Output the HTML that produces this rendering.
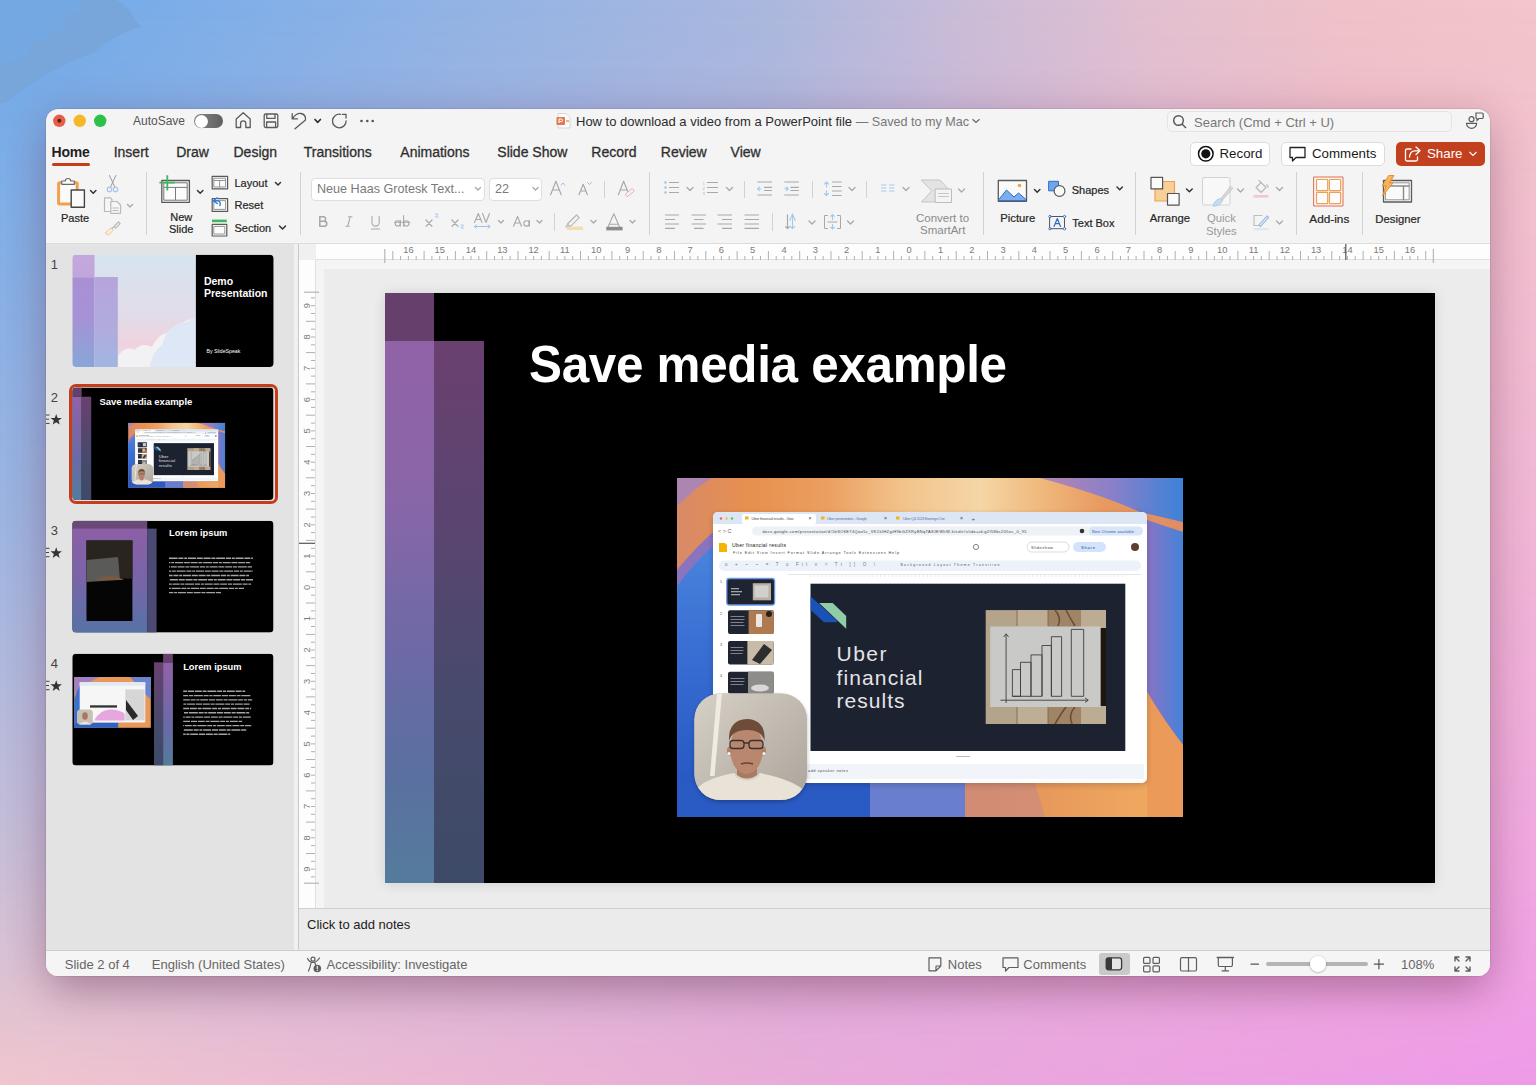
<!DOCTYPE html>
<html><head><meta charset="utf-8">
<style>
*{margin:0;padding:0;box-sizing:border-box}
html,body{width:1536px;height:1085px;overflow:hidden}
body{position:relative;font-family:"Liberation Sans",sans-serif;background:linear-gradient(to right,#6eaaea 0%,#8cb2e6 25%,#aab8de 50%,#c8bcd8 62%,#e2c0d0 75%,#f0c2c8 88%,#f2c6ca 100%)}
.a{position:absolute}
#bgb{left:0;top:0;width:1536px;height:1085px;background:linear-gradient(to right,#f0c6ce 0%,#e8acd8 50%,#ee9ae8 100%);-webkit-mask-image:linear-gradient(to bottom,transparent 0%,rgba(0,0,0,.36) 48%,rgba(0,0,0,.7) 80%,#000 100%)}
#win{left:46px;top:109px;width:1444px;height:867px;border-radius:12px;background:#f4f4f4;overflow:hidden;box-shadow:0 20px 40px -6px rgba(90,35,60,.34),0 0 40px 4px rgba(100,40,90,.12),0 0 0 .5px rgba(0,0,0,.15)}
.t{position:absolute;white-space:nowrap;line-height:1}
</style></head><body>
<div class="a" id="bgb"></div>
<svg class="a" style="left:0;top:0" width="160" height="110"><polygon points="0,0 80,0 80,12 71,13 60,30 45,38 32,42 28,55 15,60 0,66" fill="#73a8e3"/><polygon points="80,0 116,0 128,8 135,20 141,27 130,30 120,35 107,42 95,52 85,56 70,62 55,70 45,75 35,82 25,88 15,95 8,102 0,104 0,66 15,60 28,55 32,42 45,38 60,30 71,13 80,12" fill="#78a6da"/></svg>

<div class="a" id="win">
  <!-- everything inside uses coordinates relative to window: subtract (46,109) -->

  <!-- TITLE BAR -->
  <svg class="a" style="left:0;top:0" width="70" height="24">
    <circle cx="13.3" cy="11.8" r="6.2" fill="#e5604a"/><circle cx="13.3" cy="11.8" r="2" fill="#5a1f14"/>
    <circle cx="33.8" cy="11.8" r="6.2" fill="#f5b928"/>
    <circle cx="54.2" cy="11.8" r="6.2" fill="#2cc14a"/>
  </svg>
  <div class="t" style="left:87px;top:6px;font-size:12px;color:#555">AutoSave</div>
  <div class="a" style="left:148px;top:5px;width:29px;height:14px;border-radius:7px;background:linear-gradient(to right,#8a8a8a,#5e5e5e)"></div>
  <div class="a" style="left:148.5px;top:5.5px;width:13px;height:13px;border-radius:50%;background:#fff;box-shadow:0 0 1px rgba(0,0,0,.4)"></div>
  <svg class="a" style="left:188px;top:2px" width="200" height="22" fill="none" stroke="#5a5a5a" stroke-width="1.3" stroke-linejoin="round" stroke-linecap="round">
    <path d="M2.2 16.5 V8 L9.2 1.8 L16.2 8 V16.5 H11.8 V12.5 A2.6 2.6 0 0 0 6.6 12.5 V16.5 Z"/>
    <path d="M31.7 3 H42.3 A1.5 1.5 0 0 1 43.8 4.5 V15 A1.5 1.5 0 0 1 42.3 16.5 H31.7 A1.5 1.5 0 0 1 30.2 15 V4.5 A1.5 1.5 0 0 1 31.7 3 Z M32.8 3 V7.4 H41 V3 M32.6 16.5 V11 H41.6 V16.5"/>
    <path d="M58.2 2.7 V7.8 H63.5 M58.4 7.8 Q62 2 67 2.5 Q72 3.5 71.5 9 L61 17.8"/>
    <path d="M81 8.5 L83.7 11.4 L86.4 8.5" stroke-width="1.7" stroke="#333"/>
    <path d="M106.3 3.3 A6.8 6.8 0 1 0 112.1 9.8 M108.2 3.3 H112 V7.1"/>
  </svg>
  <svg class="a" style="left:312px;top:8px" width="18" height="8" fill="#555"><circle cx="3.5" cy="4" r="1.3"/><circle cx="9.3" cy="4" r="1.3"/><circle cx="14.7" cy="4" r="1.3"/></svg>
  <svg class="a" style="left:510px;top:3px" width="16" height="17">
    <path d="M2 1.5 H10 L14 5.5 V16 H2 Z" fill="#fbfbfb" stroke="#d0d0d0" stroke-width=".8"/>
    <rect x="0.5" y="5" width="8.5" height="8" rx="1" fill="#e07850"/>
    <path d="M3 11 V7 H5.2 A1.3 1.3 0 0 1 5.2 9.6 H3" fill="none" stroke="#fff" stroke-width="1"/>
    <path d="M10 9 H13" stroke="#f0b090" stroke-width="2"/>
  </svg>
  <div class="t" style="left:530px;top:6px;font-size:13px;color:#2b2b2b">How to download a video from a PowerPoint file <span style="color:#777;font-size:12.6px">— Saved to my Mac</span></div>
  <svg class="a" style="left:924.5px;top:9px" width="10" height="6" fill="none" stroke="#666" stroke-width="1.2"><path d="M1.5 1.2 L5 4.5 L8.5 1.2"/></svg>
  <div class="a" style="left:1121px;top:1.5px;width:285px;height:21px;border-radius:5px;border:1px solid #e4e4e4;background:#f5f5f5"></div>
  <svg class="a" style="left:1126px;top:5px" width="16" height="16" fill="none" stroke="#555" stroke-width="1.4"><circle cx="6.5" cy="6.5" r="4.8"/><path d="M10 10 L14 14"/></svg>
  <div class="t" style="left:1148px;top:6.5px;font-size:13px;color:#777">Search (Cmd + Ctrl + U)</div>
  <svg class="a" style="left:1419px;top:2px" width="20" height="18" fill="none" stroke="#5a5a5a" stroke-width="1.2">
    <circle cx="6.5" cy="8.2" r="2.5"/><path d="M1.6 12.4 H11.6 A5 5 0 0 1 1.6 12.4 Z"/>
    <path d="M11 2 H17 A1.2 1.2 0 0 1 18.2 3.2 V6.3 A1.2 1.2 0 0 1 17 7.5 H14 L12 9.3 V7.5 A1 1 0 0 1 11 6.5 V3 A1 1 0 0 1 11 2 Z" />
  </svg>
  <div class="a" style="left:1143.5px;top:32.5px;width:80px;height:24px;border-radius:5px;border:1px solid #dcdcdc;background:#fff"></div>
  <svg class="a" style="left:1151px;top:36px" width="18" height="18"><circle cx="8.8" cy="8.8" r="7.3" fill="none" stroke="#111" stroke-width="1.5"/><circle cx="8.8" cy="8.8" r="4.6" fill="#111"/></svg>
  <div class="t" style="left:1173.5px;top:38px;font-size:13.3px;color:#1a1a1a">Record</div>
  <div class="a" style="left:1235px;top:32.5px;width:103.5px;height:24px;border-radius:5px;border:1px solid #dcdcdc;background:#fff"></div>
  <svg class="a" style="left:1242px;top:36px" width="20" height="18" fill="none" stroke="#222" stroke-width="1.3" stroke-linejoin="round"><path d="M2 2.5 H17 V12.5 H8 L4.5 16 V12.5 H2 Z"/></svg>
  <div class="t" style="left:1266px;top:38px;font-size:13.3px;color:#1a1a1a">Comments</div>
  <div class="a" style="left:1350px;top:32.5px;width:88.5px;height:24px;border-radius:5px;background:#c3401f"></div>
  <svg class="a" style="left:1358px;top:36px" width="18" height="18" fill="none" stroke="#fff" stroke-width="1.3" stroke-linejoin="round" stroke-linecap="round"><path d="M7 4 H3 A1.5 1.5 0 0 0 1.5 5.5 V14.5 A1.5 1.5 0 0 0 3 16 H12 A1.5 1.5 0 0 0 13.5 14.5 V12"/><path d="M12 2 L16 5.8 L12 9.5 M16 5.8 H11 Q6 5.8 5.5 12"/></svg>
  <div class="t" style="left:1381px;top:38px;font-size:13.3px;color:#fff">Share</div>
  <svg class="a" style="left:1422px;top:42px" width="10" height="6" fill="none" stroke="#fff" stroke-width="1.2"><path d="M1.5 1 L5 4.5 L8.5 1"/></svg>

  <!-- TABS -->
  <div class="t" style="left:5.5px;top:36px;font-size:14px;color:#1f1f1f;font-weight:700;letter-spacing:-.2px">Home</div>
  <div class="a" style="left:5.7px;top:54px;width:38px;height:3px;border-radius:2px;background:#c43e1c"></div>
  <div class="t" style="left:67.7px;top:36px;font-size:14px;color:#2f2f2f;-webkit-text-stroke:.3px #2f2f2f">Insert</div>
  <div class="t" style="left:130.2px;top:36px;font-size:14px;color:#2f2f2f;-webkit-text-stroke:.3px #2f2f2f">Draw</div>
  <div class="t" style="left:187.5px;top:36px;font-size:14px;color:#2f2f2f;-webkit-text-stroke:.3px #2f2f2f">Design</div>
  <div class="t" style="left:257.8px;top:36px;font-size:14px;color:#2f2f2f;-webkit-text-stroke:.3px #2f2f2f">Transitions</div>
  <div class="t" style="left:354.3px;top:36px;font-size:14px;color:#2f2f2f;-webkit-text-stroke:.3px #2f2f2f">Animations</div>
  <div class="t" style="left:451.3px;top:36px;font-size:14px;color:#2f2f2f;-webkit-text-stroke:.3px #2f2f2f">Slide Show</div>
  <div class="t" style="left:545.3px;top:36px;font-size:14px;color:#2f2f2f;-webkit-text-stroke:.3px #2f2f2f">Record</div>
  <div class="t" style="left:614.8px;top:36px;font-size:14px;color:#2f2f2f;-webkit-text-stroke:.3px #2f2f2f">Review</div>
  <div class="t" style="left:684.6px;top:36px;font-size:14px;color:#2f2f2f;-webkit-text-stroke:.3px #2f2f2f">View</div>
  <!-- panels -->
  <div class="a" style="left:0;top:135px;width:1444px;height:1px;background:#f4f4f4"></div>
  <div class="a" id="leftpanel" style="left:0;top:135px;width:248px;height:706px;background:#e3e3e3"></div>
  <div class="a" style="left:248px;top:135px;width:4px;height:706px;background:#f0f0f0"></div>
  <div class="a" style="left:252px;top:135px;width:1px;height:706px;background:#c8c8c8"></div>
  <div class="a" style="left:253px;top:135px;width:1191px;height:1px;background:#d6d6d6"></div>
  <div class="a" style="left:0;top:134px;width:1444px;height:1px;background:#dcdcdc"></div>
  <!-- rulers -->
  <div class="a" style="left:253px;top:135px;width:1191px;height:16px;background:#fdfdfd;border-bottom:1px solid #e0e0e0"></div>
  <div class="a" style="left:253px;top:151px;width:17px;height:648px;background:#fdfdfd;border-right:1px solid #e0e0e0"></div>
  <div class="a" style="left:253px;top:135px;width:17px;height:16px;background:#f0f0f0"></div>
  <!-- canvas -->
  <div class="a" style="left:270px;top:151px;width:8px;height:648px;background:#f5f5f5"></div>
  <div class="a" style="left:270px;top:151px;width:1174px;height:9px;background:#f5f5f5"></div>
  <div class="a" style="left:278px;top:160px;width:1166px;height:639px;background:#ececec"></div>
  <!-- notes -->
  <div class="a" style="left:253px;top:799px;width:1191px;height:1px;background:#cfcfcf"></div>
  <div class="a" style="left:253px;top:800px;width:1191px;height:41px;background:#ebebeb"></div>
  <div class="t" style="left:261px;top:809px;font-size:13px;color:#1c1c1c">Click to add notes</div>
  <!-- status -->
  <div class="a" style="left:0;top:841px;width:1444px;height:1px;background:#cdcdcd"></div>
  <div class="a" style="left:0;top:842px;width:1444px;height:25px;background:#f5f5f5"></div>
  <!-- slide -->
  <div class="a" id="slide" style="left:339px;top:184px;width:1050px;height:590px;background:#000;box-shadow:0 1px 12px rgba(0,0,0,.12)"></div>
</div>

<div class="a" id="ov" style="left:0;top:0;width:1536px;height:1085px">

  <!-- SLIDE CONTENT -->
  <div class="a" style="left:385px;top:293px;width:49px;height:48px;background:#673f6d"></div>
  <div class="a" style="left:385px;top:341px;width:49px;height:542px;background:linear-gradient(to bottom,#9262a7 0%,#8866a8 30%,#6a6aa6 60%,#5a70a0 80%,#547c9c 100%)"></div>
  <div class="a" style="left:434px;top:341px;width:49.5px;height:542px;background:linear-gradient(to bottom,#6a4070 0%,#5a4570 35%,#474a6c 65%,#3d4a68 100%)"></div>
  <div class="t" style="left:529px;top:338px;font-size:52.5px;font-weight:700;color:#fff;transform:scaleX(.94);transform-origin:0 0;letter-spacing:-.3px">Save media example</div>

  <!-- EMBEDDED IMAGE -->
  <svg class="a" style="left:677px;top:478px" width="506" height="339" viewBox="677 478 506 339">
    <defs>
      <linearGradient id="wg1" x1="0" y1="0" x2="1" y2="0"><stop offset="0" stop-color="#d88a68"/><stop offset=".15" stop-color="#e8904e"/><stop offset=".3" stop-color="#eba062"/><stop offset=".45" stop-color="#f2c48c"/><stop offset=".6" stop-color="#f5d6a6"/><stop offset=".72" stop-color="#efb87c"/><stop offset=".84" stop-color="#e89a60"/><stop offset="1" stop-color="#e08c64"/></linearGradient><linearGradient id="wg5" x1="0" y1="0" x2="1" y2="0"><stop offset="0" stop-color="#b884b0"/><stop offset=".5" stop-color="#8a80c8"/><stop offset="1" stop-color="#3c82d8"/></linearGradient>
      <linearGradient id="wg2" x1="0" y1="0" x2="0" y2="1"><stop offset="0" stop-color="#4a84dc"/><stop offset=".4" stop-color="#3a70d4"/><stop offset="1" stop-color="#2858c4"/></linearGradient>
      <linearGradient id="wg3" x1="0" y1="0" x2="1" y2="0"><stop offset="0" stop-color="#8a74c4"/><stop offset="1" stop-color="#4482d8"/></linearGradient>
      <linearGradient id="wg4" x1="0" y1="0" x2="1" y2="0"><stop offset="0" stop-color="#e08e58"/><stop offset="1" stop-color="#f0a860"/></linearGradient>
    </defs>
    <g id="emb">
    <rect x="677" y="478" width="506" height="339" fill="url(#wg1)"/>
    <path d="M677 478 H712 Q698 486 688 496 Q682 502 677 505 Z" fill="#a084c4" opacity=".8"/>
    
    <path d="M677 570 Q695 548 713 532 V783 H677 Z" fill="#8a74c0"/>
    <path d="M677 586 Q695 562 713 546 V783 H677 Z" fill="url(#wg2)"/>
    <path d="M1040 478 Q1100 494 1140 512 L1183 522 V478 Z" fill="url(#wg5)"/>
    <path d="M1147 520 L1183 532 V745 Q1165 722 1147 692 Z" fill="url(#wg3)"/>
    <path d="M1147 692 Q1165 722 1183 745 V817 H1147 Z" fill="#eb9a5a"/>
    <path d="M677 783 H965 V817 H677 Z" fill="#2a5ac4"/>
    <path d="M870 783 H965 V817 H870 Z" fill="#6a7ed0"/>
    <path d="M965 783 H1147 V817 H965 Z" fill="url(#wg4)"/>
    <path d="M965 783 H1035 L1045 817 H965 Z" fill="#cc8a80" opacity=".7"/>
    <!-- browser window -->
    <rect x="713" y="514" width="434" height="271" rx="5" fill="#000" opacity=".18" filter="blur(3px)"/>
    <rect x="713" y="512" width="434" height="271" rx="5" fill="#fff"/>
    <path d="M713 524 V517 A5 5 0 0 1 718 512 H1142 A5 5 0 0 1 1147 517 V524 Z" fill="#dde6f5"/>
    <circle cx="721" cy="518.5" r="1.3" fill="#ec6a5e"/><circle cx="726.5" cy="518.5" r="1.3" fill="#f4bf4f"/><circle cx="732" cy="518.5" r="1.3" fill="#61c554"/>
    <rect x="742" y="514" width="74" height="10" rx="2" fill="#fff"/>
    <rect x="745" y="516.5" width="3.5" height="3" fill="#f3b31b"/>
    <rect x="821" y="516.5" width="3.5" height="3" fill="#f3b31b"/>
    <rect x="896" y="516.5" width="3.5" height="3" fill="#f3b31b"/>
    <rect x="752" y="526.5" width="354" height="9" rx="4.5" fill="#eef1f6"/>
    <rect x="1089" y="526.5" width="54" height="9" rx="4.5" fill="#d9e5f8"/>
    <circle cx="1082" cy="531" r="2.3" fill="#333"/>
    <path d="M719 543 H725 L727 545 V552 H719 Z" fill="#f5b400"/>
    <rect x="1027" y="542" width="42" height="10" rx="5" fill="#fff" stroke="#c8ccd2" stroke-width=".7"/>
    <rect x="1073" y="542" width="33" height="10" rx="5" fill="#d3e3fd"/>
    <circle cx="1135" cy="547" r="4" fill="#5a4030"/>
    <circle cx="976" cy="547" r="2.6" fill="none" stroke="#666" stroke-width=".8"/>
    <rect x="719" y="560.5" width="422" height="10.5" rx="5" fill="#edf2fa"/>
    <g font-family="Liberation Sans" fill="#555">
      <text x="751.5" y="519.8" font-size="4" textLength="42">Uber financial results - Goo</text>
      <text x="808.5" y="520" font-size="5" fill="#333">×</text>
      <text x="827" y="519.8" font-size="4" fill="#6a7aa8" textLength="40">Uber presentation - Google</text>
      <text x="884" y="520" font-size="5" fill="#333">×</text>
      <text x="903" y="519.8" font-size="4" fill="#6a7aa8" textLength="42">Uber Q4 2023 Earnings Ove</text>
      <text x="960" y="520" font-size="5" fill="#333">×</text>
      <text x="971.5" y="520.5" font-size="6" fill="#555">+</text>
      <text x="718" y="533" font-size="5.5" fill="#666">&lt;  &gt;  C</text>
      <text x="762.5" y="532.5" font-size="4" fill="#444" textLength="264">docs.google.com/presentation/d/1bSO6E74Qoo5c_VK1kIHZgiH9bGZXRyBNqTA8JEWhW-k/edit#slide=id.g2f58bc205ec_0_95</text>
      <text x="1092" y="532.5" font-size="3.8" fill="#3a5a9a" textLength="42">New Chrome available</text>
      <text x="732" y="546.5" font-size="5.2" fill="#222" textLength="54">Uber financial results</text>
      <text x="733" y="553.5" font-size="3.8" fill="#444" textLength="166">File   Edit   View   Insert   Format   Slide   Arrange   Tools   Extensions   Help</text>
      <text x="1031" y="548.5" font-size="4" fill="#444" textLength="22">Slideshow</text>
      <text x="1081" y="548.5" font-size="4" fill="#1a3a7a" textLength="14">Share</text>
      <text x="900.5" y="565.5" font-size="3.6" fill="#555" textLength="99">Background    Layout    Theme    Transition</text>
      <text x="725" y="566" font-size="4.5" fill="#777" textLength="150">o   +  ~  ~  =  T  o  Fit     v    &gt;  Tt  []  O  \</text>
      <text x="720" y="583" font-size="3.8" fill="#555">1</text>
      <text x="720" y="615" font-size="3.8" fill="#555">2</text>
      <text x="720" y="646" font-size="3.8" fill="#555">3</text>
      <text x="720" y="676.5" font-size="3.8" fill="#555">4</text>
          </g>
    <path d="M810 576 H1125" stroke="#c8ccd2" stroke-width="1" stroke-dasharray=".8 3.1"/>
    <!-- filmstrip -->
    <rect x="726.8" y="578.5" width="47.8" height="26.5" rx="2.5" fill="#1f2430" stroke="#6a98e8" stroke-width="1.3"/>
    <rect x="752.8" y="583.2" width="18.2" height="17.1" fill="#b8b0a0"/><rect x="754.5" y="585.5" width="14" height="12" fill="#d0d0cc"/>
    <rect x="731" y="588" width="8" height="1.3" fill="#9aa"/><rect x="731" y="591" width="11" height="1.3" fill="#9aa"/><rect x="731" y="594" width="9" height="1.3" fill="#9aa"/>
    <rect x="728" y="610.3" width="45.6" height="23.7" rx="2" fill="#1f2430"/><rect x="748.6" y="610.3" width="25" height="23.7" fill="#b07a50"/><rect x="756" y="614" width="6" height="13" rx="1" fill="#e8e8e8"/><circle cx="769" cy="614" r="3" fill="#222"/>
    <rect x="728" y="641" width="45.6" height="23.6" rx="2" fill="#1f2430"/><rect x="747.4" y="641" width="26.2" height="23.6" fill="#c8bca8"/><path d="M752 660 L764 644 L772 650 L760 664 Z" fill="#2e2e30"/>
    <rect x="728" y="671.7" width="45.6" height="22" rx="2" fill="#1f2430"/><rect x="748" y="671.7" width="25.6" height="22" fill="#8e8c88"/><ellipse cx="760" cy="688" rx="9" ry="3.5" fill="#d8d8d8"/>
    <g fill="#8a909a"><rect x="730.5" y="616" width="14" height=".9"/><rect x="730.5" y="619" width="14" height=".9"/><rect x="730.5" y="622" width="13" height=".9"/><rect x="730.5" y="625" width="14" height=".9"/><rect x="730.5" y="647" width="13" height=".9"/><rect x="730.5" y="650" width="13" height=".9"/><rect x="730.5" y="653" width="12" height=".9"/><rect x="730.5" y="678" width="14" height=".9"/><rect x="730.5" y="681" width="14" height=".9"/><rect x="730.5" y="684" width="13" height=".9"/></g>
    <rect x="788" y="574" width="353" height="1" fill="#e4e6ea"/>
    <!-- docs slide -->
    <rect x="810.5" y="583.7" width="314.8" height="167.3" fill="#1d2230"/>
    <path d="M810.6 596.3 L837.4 621 L836.5 622.3 H824.1 L810.6 610.1 Z" fill="#1a52b8"/>
    <path d="M819.1 603 H832.7 L846.2 616 V628.7 Z" fill="#90cca8"/>
    <text x="836.5" y="661.3" font-family="Liberation Sans" font-size="21" fill="#e4e4e6" font-weight="400" textLength="50">Uber</text>
    <text x="836.5" y="684.5" font-family="Liberation Sans" font-size="21" fill="#e4e4e6" textLength="86">financial</text>
    <text x="836.5" y="707.8" font-family="Liberation Sans" font-size="21" fill="#e4e4e6" textLength="68">results</text>
    <!-- chart photo -->
    <rect x="985.7" y="610.1" width="120.3" height="113.9" fill="#b4a48c"/>
    <rect x="1017" y="610.1" width="31" height="113.9" fill="#bfae96"/>
    <rect x="1048" y="610.1" width="33" height="113.9" fill="#a08466"/>
    <rect x="1081" y="610.1" width="25" height="113.9" fill="#bcac94"/>
    <path d="M1055 610 Q1062 618 1058 626 M1066 610 Q1070 618 1075 626 M1055 724 Q1062 712 1066 707 M1072 724 Q1068 714 1075 707" stroke="#6a4a30" stroke-width="1.5" fill="none"/>
    <path d="M1017 610 V626 M1017 707 V724 M1048 610 V626 M1048 707 V724" stroke="#7a6048" stroke-width=".8"/>
    <rect x="990.2" y="626.5" width="110.5" height="80.5" fill="#c9c9c7"/>
    <rect x="1100.7" y="628" width="5.3" height="78" fill="#1e1610"/>
    <g fill="none" stroke="#3e3e3e" stroke-width=".9">
      <path d="M1006.1 703 V634 M1003.6 637 L1006.1 633.8 L1008.6 637"/>
      <path d="M1000.4 700.2 H1088 M1085 698 L1088.3 700.2 L1085 702.4"/>
      <path d="M1012.4 696.3 V669.6 H1020.5 V696.3 Z M1020.5 696.3 V662.3 H1031 V696.3 M1031 696.3 V654.9 H1042 V696.3 H1012.4 M1042 696.3 V645.5 H1051.4 V696.3 M1051.4 696.3 V636.7 H1061.6 V696.3 Z M1071.3 696.3 V629.4 H1083.7 V696.3 Z"/>
    </g>
    <rect x="788" y="764" width="356" height="15" fill="#f1f4f9"/>
    <rect x="956" y="756" width="14" height="1" fill="#bbb"/>
    <text x="808" y="771.5" font-family="Liberation Sans" font-size="4" fill="#555" textLength="40">add speaker notes</text>
    <!-- face -->
    <defs><clipPath id="fc"><rect x="694.4" y="693.4" width="112.6" height="106.6" rx="26"/></clipPath></defs>
    <rect x="694.4" y="695.5" width="112.6" height="106.6" rx="26" fill="#000" opacity=".25" filter="blur(2px)"/>
    <g clip-path="url(#fc)">
      <rect x="694" y="693" width="114" height="108" fill="#c8c2b8"/>
      <rect x="694" y="693" width="114" height="108" fill="url(#fbg)"/>
      <path d="M717 693 L722 693 L714.5 776 L710 776 Z" fill="#f0ebe2"/>
      <path d="M737 763 H757 V785 H737 Z" fill="#a87a64"/>
      <path d="M694 801 V794 Q698 780 734 773 Q747 786 760 773 Q796 780 808 794 V801 Z" fill="#e9e2d6"/>
      <path d="M735 775 Q747 784 759 775" stroke="#d8d0c4" stroke-width="2" fill="none"/>
      <ellipse cx="746.5" cy="749" rx="16.5" ry="25" fill="#b8876e"/>
      <ellipse cx="729.5" cy="751" rx="2.5" ry="4.5" fill="#b08068"/><ellipse cx="763.5" cy="751" rx="2.5" ry="4.5" fill="#b08068"/>
      <circle cx="729" cy="753.5" r="1.6" fill="#f4f4f4"/><circle cx="764" cy="753.5" r="1.6" fill="#f4f4f4"/>
      <path d="M729 741 Q728 720 747 719 Q766 720 764.5 741 Q762 730 747 730 Q732 730 729 741 Z" fill="#6e4c3a"/>
      <g fill="none" stroke="#3a3230" stroke-width="1.3"><rect x="730" y="740.5" width="14" height="8" rx="3"/><rect x="749" y="740.5" width="14" height="8" rx="3"/><path d="M744 743 H749"/></g>
      <path d="M741 764 Q747 762 753 764" stroke="#6a4238" stroke-width="1.4" fill="none"/>
    </g>
    </g>
    <defs><linearGradient id="fbg" x1="0" y1="0" x2="1" y2="1"><stop offset="0" stop-color="#d6d0c6"/><stop offset="1" stop-color="#aaa49a"/></linearGradient></defs>
  </svg>

  <!-- THUMBNAILS -->
  <g></g>
  <div class="t" style="left:50.8px;top:257.5px;font-size:13px;color:#444">1</div>
  <div class="t" style="left:50.8px;top:390.5px;font-size:13px;color:#444">2</div>
  <div class="t" style="left:50.8px;top:523.7px;font-size:13px;color:#444">3</div>
  <div class="t" style="left:50.8px;top:656.7px;font-size:13px;color:#444">4</div>
  <div class="a" style="left:68.8px;top:383.6px;width:209px;height:120px;border-radius:7px;border:3.2px solid #c43e1c"></div>
  <svg class="a" style="left:0;top:0" width="290" height="780">
    <defs>
      <linearGradient id="t1bg" x1="0" y1="0" x2="0" y2="1"><stop offset="0" stop-color="#d6e4f0"/><stop offset=".55" stop-color="#e2dce8"/><stop offset=".8" stop-color="#f0d2de"/><stop offset="1" stop-color="#e8e6f2"/></linearGradient>
      <linearGradient id="t1a" x1="0" y1="0" x2="0" y2="1"><stop offset="0" stop-color="#c4a8dc"/><stop offset=".2" stop-color="#c0a6dc"/><stop offset=".21" stop-color="#a990d4"/><stop offset=".55" stop-color="#a692d4"/><stop offset="1" stop-color="#88a6d8"/></linearGradient><linearGradient id="t1b" x1="0" y1="0" x2="0" y2="1"><stop offset="0" stop-color="#b6a4dc"/><stop offset=".6" stop-color="#b0acdc"/><stop offset="1" stop-color="#a0b6e2"/></linearGradient>
      <linearGradient id="pb" x1="0" y1="0" x2="0" y2="1"><stop offset="0" stop-color="#9262a7"/><stop offset=".6" stop-color="#6a6aa6"/><stop offset="1" stop-color="#547c9c"/></linearGradient>
      <linearGradient id="pb2" x1="0" y1="0" x2="0" y2="1"><stop offset="0" stop-color="#6a4070"/><stop offset=".6" stop-color="#474a6c"/><stop offset="1" stop-color="#3d4a68"/></linearGradient>
      <linearGradient id="pb3" x1="0" y1="0" x2="0" y2="1"><stop offset="0" stop-color="#8e5ea6"/><stop offset=".5" stop-color="#7a64a8"/><stop offset="1" stop-color="#5672a6"/></linearGradient>
      <clipPath id="c1"><rect x="72.3" y="254.7" width="201.2" height="112.3" rx="4"/></clipPath>
      <clipPath id="c2"><rect x="72.3" y="387.5" width="201.2" height="112.5" rx="4"/></clipPath>
      <clipPath id="c3"><rect x="72.3" y="520.8" width="201.2" height="111.8" rx="4"/></clipPath>
      <clipPath id="c4"><rect x="72.3" y="653.7" width="201.2" height="111.8" rx="4"/></clipPath>
    </defs>
    <g fill="#333"><path d="M56.2 413.9 L57.6 417.9 L61.9 418 L58.5 420.6 L59.7 424.6 L56.2 422.2 L52.7 424.6 L53.9 420.6 L50.5 418 L54.8 417.9 Z"/>
      <path d="M56.2 547.2 L57.6 551.2 L61.9 551.3 L58.5 553.9 L59.7 557.9 L56.2 555.5 L52.7 557.9 L53.9 553.9 L50.5 551.3 L54.8 551.2 Z"/>
      <path d="M56.2 680.2 L57.6 684.2 L61.9 684.3 L58.5 686.9 L59.7 690.9 L56.2 688.5 L52.7 690.9 L53.9 686.9 L50.5 684.3 L54.8 684.2 Z"/></g>
    <g stroke="#444" stroke-width="1"><path d="M46 415 H49.5 M46 419.2 H49 M46 423.4 H49.5 M46 548.3 H49.5 M46 552.5 H49 M46 556.7 H49.5 M46 681.3 H49.5 M46 685.5 H49 M46 689.7 H49.5"/></g>
    <!-- slide 1 -->
    <g clip-path="url(#c1)">
      <rect x="72.3" y="254.7" width="201.2" height="112.3" fill="url(#t1bg)"/>
      <path d="M117 367 V358 Q125 345 135 350 Q142 342 152 347 Q160 330 175 333 Q180 320 196 318 V367 Z" fill="#f2f2f4"/>
      <path d="M150 367 Q152 352 162 345 Q168 322 188 322 Q192 316 196 318 V367 Z" fill="#dde7f5"/>
      <rect x="72.3" y="254.7" width="22.2" height="112.3" fill="url(#t1a)"/>
      <rect x="94.5" y="277" width="23.3" height="90" fill="url(#t1b)"/>
      <rect x="195.9" y="254.7" width="78" height="112.3" fill="#000"/>
      <text x="203.9" y="285.2" font-family="Liberation Sans" font-weight="700" font-size="10.5" fill="#fff">Demo</text>
      <text x="203.9" y="297.3" font-family="Liberation Sans" font-weight="700" font-size="10.5" fill="#fff">Presentation</text>
      <text x="206.5" y="353" font-family="Liberation Sans" font-size="5.2" fill="#fff">By SlideSpeak</text>
    </g>
    <!-- slide 2 -->
    <g clip-path="url(#c2)">
      <rect x="72.3" y="387.5" width="201.2" height="112.5" fill="#000"/>
      <rect x="72.3" y="387.5" width="9.4" height="9.2" fill="#673f6d"/>
      <rect x="72.3" y="396.7" width="9.4" height="103.3" fill="url(#pb)"/>
      <rect x="81.7" y="396.7" width="9.5" height="103.3" fill="url(#pb2)"/>
      <text x="99.4" y="404.6" font-family="Liberation Sans" font-weight="700" font-size="9.5" fill="#fff">Save media example</text>
      <use href="#emb" transform="translate(128.2 422.9) scale(.1914) translate(-677 -478)"/>
    </g>
    <!-- slide 3 -->
    <g clip-path="url(#c3)">
      <rect x="72.3" y="520.8" width="201.2" height="111.8" fill="#000"/>
      <rect x="72.3" y="520.8" width="74.8" height="111.8" fill="url(#pb3)"/>
      <rect x="72.3" y="520.8" width="74.8" height="7.8" fill="#6a4878"/>
      <rect x="147.1" y="528.6" width="9.5" height="104" fill="#4a4a72"/>
      <rect x="86.5" y="540.5" width="45.9" height="80.5" fill="#050505"/>
      <rect x="86.5" y="540.5" width="45.9" height="38" fill="#2a241e"/>
      <path d="M86.5 560 L118 557 L120 580 L86.5 582 Z" fill="#5a5a58"/>
      <path d="M96 580 Q110 572 124 580 Z" fill="#7a5a40"/>
      <text x="169" y="536.3" font-family="Liberation Sans" font-weight="700" font-size="9.3" fill="#fff">Lorem ipsum</text>
      <path d="M169 558.25 h84" stroke="#a4a4a4" stroke-width="1.35" stroke-dasharray="7 .8 4 .8 9 .8 5 .8 3 .8 8 .8 6 .8" stroke-dashoffset="13"/><path d="M169 562.55 h82" stroke="#a4a4a4" stroke-width="1.35" stroke-dasharray="7 .8 4 .8 9 .8 5 .8 3 .8 8 .8 6 .8" stroke-dashoffset="26"/><path d="M169 566.85 h83" stroke="#a4a4a4" stroke-width="1.35" stroke-dasharray="7 .8 4 .8 9 .8 5 .8 3 .8 8 .8 6 .8" stroke-dashoffset="39"/><path d="M169 571.15 h84" stroke="#a4a4a4" stroke-width="1.35" stroke-dasharray="7 .8 4 .8 9 .8 5 .8 3 .8 8 .8 6 .8" stroke-dashoffset="5"/><path d="M169 575.45 h80" stroke="#a4a4a4" stroke-width="1.35" stroke-dasharray="7 .8 4 .8 9 .8 5 .8 3 .8 8 .8 6 .8" stroke-dashoffset="18"/><path d="M169 579.75 h84" stroke="#a4a4a4" stroke-width="1.35" stroke-dasharray="7 .8 4 .8 9 .8 5 .8 3 .8 8 .8 6 .8" stroke-dashoffset="31"/><path d="M169 584.05 h82" stroke="#a4a4a4" stroke-width="1.35" stroke-dasharray="7 .8 4 .8 9 .8 5 .8 3 .8 8 .8 6 .8" stroke-dashoffset="44"/><path d="M169 588.35 h75" stroke="#a4a4a4" stroke-width="1.35" stroke-dasharray="7 .8 4 .8 9 .8 5 .8 3 .8 8 .8 6 .8" stroke-dashoffset="10"/><path d="M169 592.65 h52" stroke="#a4a4a4" stroke-width="1.35" stroke-dasharray="7 .8 4 .8 9 .8 5 .8 3 .8 8 .8 6 .8" stroke-dashoffset="23"/>
    </g>
    <!-- slide 4 -->
    <g clip-path="url(#c4)">
      <rect x="72.3" y="653.7" width="201.2" height="111.8" fill="#000"/>
      <rect x="154" y="662.3" width="9.1" height="103.2" fill="url(#pb2)"/>
      <rect x="163.1" y="662.3" width="9.8" height="103.2" fill="url(#pb)"/>
      <rect x="163.1" y="653.7" width="9.8" height="8.6" fill="#673f6d"/>
      <rect x="74.2" y="677" width="76.6" height="50.8" fill="#e8985a"/>
      <path d="M74.2 677 H100 Q88 682 80 690 L74.2 695 Z" fill="#a080c0"/>
      <path d="M130 677 H150.8 V700 Q140 688 130 677 Z" fill="#6a84d0"/>
      <path d="M74.2 700 Q77 690 80 686 V722.5 H74.2 Z" fill="#3a70d0"/>
      <rect x="74.2" y="722.5" width="44" height="5.3" fill="#2f62c8"/>
      <rect x="79.7" y="682.2" width="65.6" height="40.3" rx="1" fill="#f6f6f6"/>
      <rect x="79.7" y="682.2" width="65.6" height="3.5" fill="#e2e8f2"/>
      <rect x="125.3" y="689.4" width="19.3" height="31" fill="#d6d6d6"/>
      <path d="M126 700 L138 716 L133 720 L126 710 Z" fill="#2a2a2a"/>
      <path d="M94.2 720.5 Q100 709 112 709.5 Q121 710 124.6 714 V720.5 Z" fill="#e6a6e0"/>
      <rect x="90" y="705.3" width="27" height="2.3" fill="#333"/>
      <rect x="77" y="709.4" width="15.8" height="15.2" rx="3.5" fill="#c8c0b4"/>
      <ellipse cx="85" cy="716" rx="2.8" ry="3.8" fill="#a87860"/>
      <path d="M79 724.6 Q85 719 91 724.6 Z" fill="#ece6dc"/>
      <text x="183.2" y="669.5" font-family="Liberation Sans" font-weight="700" font-size="9.3" fill="#fff">Lorem ipsum</text>
      <path d="M183.2 691.25 h62" stroke="#a4a4a4" stroke-width="1.35" stroke-dasharray="7 .8 4 .8 9 .8 5 .8 3 .8 8 .8 6 .8" stroke-dashoffset="36"/><path d="M183.2 695.55 h68" stroke="#a4a4a4" stroke-width="1.35" stroke-dasharray="7 .8 4 .8 9 .8 5 .8 3 .8 8 .8 6 .8" stroke-dashoffset="2"/><path d="M183.2 699.85 h69" stroke="#a4a4a4" stroke-width="1.35" stroke-dasharray="7 .8 4 .8 9 .8 5 .8 3 .8 8 .8 6 .8" stroke-dashoffset="15"/><path d="M183.2 704.15 h67" stroke="#a4a4a4" stroke-width="1.35" stroke-dasharray="7 .8 4 .8 9 .8 5 .8 3 .8 8 .8 6 .8" stroke-dashoffset="28"/><path d="M183.2 708.45 h68" stroke="#a4a4a4" stroke-width="1.35" stroke-dasharray="7 .8 4 .8 9 .8 5 .8 3 .8 8 .8 6 .8" stroke-dashoffset="41"/><path d="M183.2 712.75 h66" stroke="#a4a4a4" stroke-width="1.35" stroke-dasharray="7 .8 4 .8 9 .8 5 .8 3 .8 8 .8 6 .8" stroke-dashoffset="7"/><path d="M183.2 717.05 h68" stroke="#a4a4a4" stroke-width="1.35" stroke-dasharray="7 .8 4 .8 9 .8 5 .8 3 .8 8 .8 6 .8" stroke-dashoffset="20"/><path d="M183.2 721.35 h59" stroke="#a4a4a4" stroke-width="1.35" stroke-dasharray="7 .8 4 .8 9 .8 5 .8 3 .8 8 .8 6 .8" stroke-dashoffset="33"/><path d="M183.2 725.65 h68" stroke="#a4a4a4" stroke-width="1.35" stroke-dasharray="7 .8 4 .8 9 .8 5 .8 3 .8 8 .8 6 .8" stroke-dashoffset="46"/><path d="M183.2 729.95 h63" stroke="#a4a4a4" stroke-width="1.35" stroke-dasharray="7 .8 4 .8 9 .8 5 .8 3 .8 8 .8 6 .8" stroke-dashoffset="12"/><path d="M183.2 734.25 h47" stroke="#a4a4a4" stroke-width="1.35" stroke-dasharray="7 .8 4 .8 9 .8 5 .8 3 .8 8 .8 6 .8" stroke-dashoffset="25"/>
    </g>
  </svg>

  <!-- STATUS BAR -->
  <div class="t" style="left:64.8px;top:958px;font-size:13px;color:#666">Slide 2 of 4</div>
  <div class="t" style="left:151.8px;top:958px;font-size:13px;color:#666">English (United States)</div>
  <div class="t" style="left:326.5px;top:958px;font-size:13px;color:#666">Accessibility: Investigate</div>
  <div class="t" style="left:947.8px;top:958px;font-size:13px;color:#666">Notes</div>
  <div class="t" style="left:1023.3px;top:958px;font-size:13px;color:#666">Comments</div>
  <div class="t" style="left:1401px;top:958px;font-size:13px;color:#666">108%</div>
  <div class="a" style="left:1098.8px;top:952.9px;width:31.1px;height:22.1px;border-radius:3px;background:#c9c9c9"></div>
  <div class="a" style="left:1266.2px;top:962.2px;width:102px;height:4px;border-radius:2px;background:#b4b4b4"></div>
  <div class="a" style="left:1310.2px;top:956.2px;width:15.6px;height:15.6px;border-radius:50%;background:#fff;box-shadow:0 .5px 2px rgba(0,0,0,.35)"></div>
  <svg class="a" style="left:0;top:940px" width="1536" height="40" fill="none" stroke="#5e5e5e" stroke-width="1.2" stroke-linejoin="round" stroke-linecap="round">
    <g transform="translate(0 -940)">
      <!-- accessibility -->
      <circle cx="313" cy="959.2" r="2" />
      <path d="M307.5 958.5 Q309.5 962.5 313 962.5 Q316.5 962.5 319.5 958 M311 963 Q310 968 308.5 971 M315 963 L316 966"/>
      <circle cx="317.3" cy="968.5" r="3.8" fill="#5e5e5e" stroke="none"/>
      <path d="M317.3 966.3 V968.8 M317.3 970.3 V970.6" stroke="#fff" stroke-width="1.1"/>
      <!-- notes -->
      <path d="M929 957.8 H940.8 V966 L936 970.8 H929 Z M936 970.8 V966.5 Q936 966 936.5 966 H940.8"/>
      <!-- comments -->
      <path d="M1003 957.8 H1018 V967.5 H1009 L1005.5 971 V967.5 H1003 Z"/>
      <!-- normal view -->
      <rect x="1106.2" y="957.8" width="15.4" height="12" rx="2.5" stroke="#3a3a3a" stroke-width="1.3" fill="#e6e6e6"/>
      <path d="M1106.2 960.3 A2.5 2.5 0 0 1 1108.7 957.8 H1112 V969.8 H1108.7 A2.5 2.5 0 0 1 1106.2 967.3 Z" fill="#3a3a3a" stroke="none"/>
      <!-- grid -->
      <rect x="1143.6" y="957.4" width="6.4" height="6" rx="1"/><rect x="1153" y="957.4" width="6.4" height="6" rx="1"/>
      <rect x="1143.6" y="965.8" width="6.4" height="6" rx="1"/><rect x="1153" y="965.8" width="6.4" height="6" rx="1"/>
      <!-- reading -->
      <rect x="1180.5" y="957.6" width="16" height="13.4" rx="1.5"/><path d="M1188.5 957.6 V971"/>
      <!-- presenter -->
      <path d="M1217.3 957.5 H1233.4" stroke-width="1.6"/>
      <path d="M1218.3 958 V965 A1.5 1.5 0 0 0 1219.8 966.5 H1230.9 A1.5 1.5 0 0 0 1232.4 965 V958 M1225.3 966.5 V970.8 M1222 970.8 H1228.6"/>
      <!-- minus plus -->
      <path d="M1251 964.2 H1258.5 M1374.3 964.2 H1383.5 M1378.9 959.6 V968.8" stroke="#555"/>
      <!-- fullscreen -->
      <path d="M1455 957 V961 M1455 957 H1459 M1455 957 L1459 961 M1470 957 V961 M1470 957 H1466 M1470 957 L1466 961 M1455 971 V967 M1455 971 H1459 M1455 971 L1459 967 M1470 971 V967 M1470 971 H1466 M1470 971 L1466 967" stroke-width="1.4"/>
    </g>
  </svg>
  <!-- RULERS -->
<svg class="a" style="left:0;top:0" width="1536" height="270">
  <g fill="#7a7a7a" font-family="Liberation Sans" font-size="9.3"><text x="408.4" y="253" text-anchor="middle">16</text><text x="439.7" y="253" text-anchor="middle">15</text><text x="471.0" y="253" text-anchor="middle">14</text><text x="502.3" y="253" text-anchor="middle">13</text><text x="533.6" y="253" text-anchor="middle">12</text><text x="564.9" y="253" text-anchor="middle">11</text><text x="596.2" y="253" text-anchor="middle">10</text><text x="627.5" y="253" text-anchor="middle">9</text><text x="658.8" y="253" text-anchor="middle">8</text><text x="690.1" y="253" text-anchor="middle">7</text><text x="721.4" y="253" text-anchor="middle">6</text><text x="752.7" y="253" text-anchor="middle">5</text><text x="784.0" y="253" text-anchor="middle">4</text><text x="815.3" y="253" text-anchor="middle">3</text><text x="846.6" y="253" text-anchor="middle">2</text><text x="877.9" y="253" text-anchor="middle">1</text><text x="909.2" y="253" text-anchor="middle">0</text><text x="940.5" y="253" text-anchor="middle">1</text><text x="971.8" y="253" text-anchor="middle">2</text><text x="1003.1" y="253" text-anchor="middle">3</text><text x="1034.4" y="253" text-anchor="middle">4</text><text x="1065.7" y="253" text-anchor="middle">5</text><text x="1097.0" y="253" text-anchor="middle">6</text><text x="1128.3" y="253" text-anchor="middle">7</text><text x="1159.6" y="253" text-anchor="middle">8</text><text x="1190.9" y="253" text-anchor="middle">9</text><text x="1222.2" y="253" text-anchor="middle">10</text><text x="1253.5" y="253" text-anchor="middle">11</text><text x="1284.8" y="253" text-anchor="middle">12</text><text x="1316.1" y="253" text-anchor="middle">13</text><text x="1347.4" y="253" text-anchor="middle">14</text><text x="1378.7" y="253" text-anchor="middle">15</text><text x="1410.0" y="253" text-anchor="middle">16</text></g>
  <path d="M392.8 251 V260 M400.6 256 V260 M408.4 256 V260 M416.2 256 V260 M424.1 251 V260 M431.9 256 V260 M439.7 256 V260 M447.5 256 V260 M455.4 251 V260 M463.2 256 V260 M471.0 256 V260 M478.8 256 V260 M486.7 251 V260 M494.5 256 V260 M502.3 256 V260 M510.1 256 V260 M518.0 251 V260 M525.8 256 V260 M533.6 256 V260 M541.4 256 V260 M549.2 251 V260 M557.1 256 V260 M564.9 256 V260 M572.7 256 V260 M580.5 251 V260 M588.4 256 V260 M596.2 256 V260 M604.0 256 V260 M611.9 251 V260 M619.7 256 V260 M627.5 256 V260 M635.3 256 V260 M643.2 251 V260 M651.0 256 V260 M658.8 256 V260 M666.6 256 V260 M674.5 251 V260 M682.3 256 V260 M690.1 256 V260 M697.9 256 V260 M705.8 251 V260 M713.6 256 V260 M721.4 256 V260 M729.2 256 V260 M737.1 251 V260 M744.9 256 V260 M752.7 256 V260 M760.5 256 V260 M768.4 251 V260 M776.2 256 V260 M784.0 256 V260 M791.8 256 V260 M799.7 251 V260 M807.5 256 V260 M815.3 256 V260 M823.1 256 V260 M831.0 251 V260 M838.8 256 V260 M846.6 256 V260 M854.4 256 V260 M862.2 251 V260 M870.1 256 V260 M877.9 256 V260 M885.7 256 V260 M893.6 251 V260 M901.4 256 V260 M909.2 256 V260 M917.0 256 V260 M924.9 251 V260 M932.7 256 V260 M940.5 256 V260 M948.3 256 V260 M956.2 251 V260 M964.0 256 V260 M971.8 256 V260 M979.6 256 V260 M987.5 251 V260 M995.3 256 V260 M1003.1 256 V260 M1010.9 256 V260 M1018.8 251 V260 M1026.6 256 V260 M1034.4 256 V260 M1042.2 256 V260 M1050.0 251 V260 M1057.9 256 V260 M1065.7 256 V260 M1073.5 256 V260 M1081.4 251 V260 M1089.2 256 V260 M1097.0 256 V260 M1104.8 256 V260 M1112.7 251 V260 M1120.5 256 V260 M1128.3 256 V260 M1136.1 256 V260 M1144.0 251 V260 M1151.8 256 V260 M1159.6 256 V260 M1167.4 256 V260 M1175.2 251 V260 M1183.1 256 V260 M1190.9 256 V260 M1198.7 256 V260 M1206.6 251 V260 M1214.4 256 V260 M1222.2 256 V260 M1230.0 256 V260 M1237.9 251 V260 M1245.7 256 V260 M1253.5 256 V260 M1261.3 256 V260 M1269.2 251 V260 M1277.0 256 V260 M1284.8 256 V260 M1292.6 256 V260 M1300.5 251 V260 M1308.3 256 V260 M1316.1 256 V260 M1323.9 256 V260 M1331.8 251 V260 M1339.6 256 V260 M1347.4 256 V260 M1355.2 256 V260 M1363.1 251 V260 M1370.9 256 V260 M1378.7 256 V260 M1386.5 256 V260 M1394.4 251 V260 M1402.2 256 V260 M1410.0 256 V260 M1417.8 256 V260 M1425.7 251 V260" stroke="#b0b0b0" stroke-width="1"/>
  <path d="M384.8 249 V263 M1433.3 249 V263" stroke="#a8a8a8" stroke-width="1"/>
  <path d="M1345.8 244 V260" stroke="#555" stroke-width="1.2"/>
</svg>
<svg class="a" style="left:0;top:0" width="330" height="910">
  <g fill="#7a7a7a" font-family="Liberation Sans" font-size="9.3"><text x="307" y="305.7" text-anchor="middle" transform="rotate(-90 307 305.7)" dy="3.2">9</text><text x="307" y="337.0" text-anchor="middle" transform="rotate(-90 307 337.0)" dy="3.2">8</text><text x="307" y="368.3" text-anchor="middle" transform="rotate(-90 307 368.3)" dy="3.2">7</text><text x="307" y="399.6" text-anchor="middle" transform="rotate(-90 307 399.6)" dy="3.2">6</text><text x="307" y="430.9" text-anchor="middle" transform="rotate(-90 307 430.9)" dy="3.2">5</text><text x="307" y="462.2" text-anchor="middle" transform="rotate(-90 307 462.2)" dy="3.2">4</text><text x="307" y="493.5" text-anchor="middle" transform="rotate(-90 307 493.5)" dy="3.2">3</text><text x="307" y="524.8" text-anchor="middle" transform="rotate(-90 307 524.8)" dy="3.2">2</text><text x="307" y="556.1" text-anchor="middle" transform="rotate(-90 307 556.1)" dy="3.2">1</text><text x="307" y="587.4" text-anchor="middle" transform="rotate(-90 307 587.4)" dy="3.2">0</text><text x="307" y="618.7" text-anchor="middle" transform="rotate(-90 307 618.7)" dy="3.2">1</text><text x="307" y="650.0" text-anchor="middle" transform="rotate(-90 307 650.0)" dy="3.2">2</text><text x="307" y="681.3" text-anchor="middle" transform="rotate(-90 307 681.3)" dy="3.2">3</text><text x="307" y="712.6" text-anchor="middle" transform="rotate(-90 307 712.6)" dy="3.2">4</text><text x="307" y="743.9" text-anchor="middle" transform="rotate(-90 307 743.9)" dy="3.2">5</text><text x="307" y="775.2" text-anchor="middle" transform="rotate(-90 307 775.2)" dy="3.2">6</text><text x="307" y="806.5" text-anchor="middle" transform="rotate(-90 307 806.5)" dy="3.2">7</text><text x="307" y="837.8" text-anchor="middle" transform="rotate(-90 307 837.8)" dy="3.2">8</text><text x="307" y="869.1" text-anchor="middle" transform="rotate(-90 307 869.1)" dy="3.2">9</text></g>
  <path d="M311 297.9 H315 M311 305.7 H315 M311 313.5 H315 M306 321.3 H315 M311 329.2 H315 M311 337.0 H315 M311 344.8 H315 M306 352.6 H315 M311 360.5 H315 M311 368.3 H315 M311 376.1 H315 M306 383.9 H315 M311 391.8 H315 M311 399.6 H315 M311 407.4 H315 M306 415.2 H315 M311 423.1 H315 M311 430.9 H315 M311 438.7 H315 M306 446.5 H315 M311 454.4 H315 M311 462.2 H315 M311 470.0 H315 M306 477.8 H315 M311 485.7 H315 M311 493.5 H315 M311 501.3 H315 M306 509.1 H315 M311 517.0 H315 M311 524.8 H315 M311 532.6 H315 M306 540.4 H315 M311 548.3 H315 M311 556.1 H315 M311 563.9 H315 M306 571.8 H315 M311 579.6 H315 M311 587.4 H315 M311 595.2 H315 M306 603.0 H315 M311 610.9 H315 M311 618.7 H315 M311 626.5 H315 M306 634.4 H315 M311 642.2 H315 M311 650.0 H315 M311 657.8 H315 M306 665.6 H315 M311 673.5 H315 M311 681.3 H315 M311 689.1 H315 M306 696.9 H315 M311 704.8 H315 M311 712.6 H315 M311 720.4 H315 M306 728.2 H315 M311 736.1 H315 M311 743.9 H315 M311 751.7 H315 M306 759.5 H315 M311 767.4 H315 M311 775.2 H315 M311 783.0 H315 M306 790.9 H315 M311 798.7 H315 M311 806.5 H315 M311 814.3 H315 M306 822.1 H315 M311 830.0 H315 M311 837.8 H315 M311 845.6 H315 M306 853.5 H315 M311 861.3 H315 M311 869.1 H315 M311 876.9 H315" stroke="#b0b0b0" stroke-width="1"/>
  <path d="M304 292.2 H319 M304 883.2 H319" stroke="#a8a8a8" stroke-width="1"/>
  <path d="M299 543.3 H315" stroke="#555" stroke-width="1.2"/>
</svg>
  <!-- RIBBON LABELS -->
  <div class="t" style="left:61px;top:213.3px;font-size:11px;color:#262626;-webkit-text-stroke:.2px #262626">Paste</div>
  <div class="t" style="left:170.3px;top:212.3px;font-size:11px;color:#262626;-webkit-text-stroke:.2px #262626">New</div>
  <div class="t" style="left:169px;top:224.2px;font-size:11px;color:#262626;-webkit-text-stroke:.2px #262626">Slide</div>
  <div class="t" style="left:234.5px;top:178px;font-size:11px;color:#262626;-webkit-text-stroke:.2px #262626">Layout</div>
  <div class="t" style="left:234.5px;top:200px;font-size:11px;color:#262626;-webkit-text-stroke:.2px #262626">Reset</div>
  <div class="t" style="left:234.5px;top:222.9px;font-size:11px;color:#262626;-webkit-text-stroke:.2px #262626">Section</div>
  <div class="a" style="left:310.7px;top:177.7px;width:174.3px;height:23.3px;border-radius:4px;border:1px solid #dedede;background:#fff"></div>
  <div class="t" style="left:317px;top:182.8px;font-size:12.6px;color:#7a7a7a">Neue Haas Grotesk Text...</div>
  <div class="a" style="left:488.7px;top:177.7px;width:53.6px;height:23.3px;border-radius:4px;border:1px solid #dedede;background:#fff"></div>
  <div class="t" style="left:495px;top:182.8px;font-size:12.6px;color:#7a7a7a">22</div>
  <div class="t" style="left:916px;top:213.4px;font-size:11.5px;color:#8a8a8a">Convert to</div>
  <div class="t" style="left:920px;top:224.7px;font-size:11.5px;color:#8a8a8a">SmartArt</div>
  <div class="t" style="left:1000.2px;top:213.4px;font-size:11.3px;color:#262626;-webkit-text-stroke:.2px #262626">Picture</div>
  <div class="t" style="left:1071.7px;top:185.4px;font-size:11px;color:#262626;-webkit-text-stroke:.2px #262626">Shapes</div>
  <div class="t" style="left:1072.3px;top:217.7px;font-size:11px;color:#262626;-webkit-text-stroke:.2px #262626">Text Box</div>
  <div class="t" style="left:1149.8px;top:213.4px;font-size:11.3px;color:#262626;-webkit-text-stroke:.2px #262626">Arrange</div>
  <div class="t" style="left:1207px;top:213.2px;font-size:11.3px;color:#9a9a9a">Quick</div>
  <div class="t" style="left:1206px;top:225.7px;font-size:11.3px;color:#9a9a9a">Styles</div>
  <div class="t" style="left:1309.3px;top:213.5px;font-size:11.8px;color:#262626;-webkit-text-stroke:.2px #262626">Add-ins</div>
  <div class="t" style="left:1375.3px;top:213.5px;font-size:11.3px;color:#262626;-webkit-text-stroke:.2px #262626">Designer</div>

  <svg class="a" style="left:0;top:0" width="1536" height="260" fill="none" stroke-linecap="round" stroke-linejoin="round">
    <!-- separators -->
    <g stroke="#d2d2d2" stroke-width="1" stroke-linecap="butt">
      <path d="M146.5 172 V235 M300.5 172 V235 M649.5 172 V235 M983.5 172 V235 M1135.5 172 V235 M1296.5 172 V235 M1362.5 172 V235"/>
      <path d="M604.5 181 V198 M744.5 181 V198 M812.5 181 V198 M866.5 181 V198 M554.5 213 V231 M772.5 213 V231"/>
    </g>
    <!-- chevrons -->
    <g stroke="#333" stroke-width="1.5">
      <path d="M90.5 190.5 L93.2 193.2 L95.9 190.5 M197.5 190.5 L200.2 193.2 L202.9 190.5 M275.5 182.5 L278 185 L280.5 182.5 M279.5 226 L282.5 229 L285.5 226"/>
      <path d="M1034.5 189.5 L1037.2 192.2 L1039.9 189.5 M1117 187 L1119.7 189.7 L1122.4 187 M1186.5 189 L1189.4 191.8 L1192.2 189"/>
    </g>
    <g stroke="#a8a8a8" stroke-width="1.3">
      <path d="M127.5 204.5 L130 207 L132.5 204.5 M475.5 187.5 L478 190 L480.5 187.5 M533 187.5 L535.5 190 L538 187.5"/>
      <path d="M498.5 220.5 L501 223 L503.5 220.5 M537 220.5 L539.5 223 L542 220.5 M591 220.5 L593.5 223 L596 220.5 M630 220.5 L632.5 223 L635 220.5"/>
      <path d="M687 187.5 L690 190.5 L693 187.5 M726.5 187.5 L729.5 190.5 L732.5 187.5 M849 187.5 L852 190.5 L855 187.5 M903 187.5 L906 190.5 L909 187.5 M958.5 189 L961.5 192 L964.5 189"/>
      <path d="M809 221 L812 224 L815 221 M847.5 221 L850.5 224 L853.5 221 M1237.5 189 L1240.5 192 L1243.5 189 M1276.5 187.5 L1279.5 190.5 L1282.5 187.5 M1276.5 221 L1279.5 224 L1282.5 221"/>
    </g>
    <!-- paste -->
    <rect x="58.6" y="182.8" width="18.6" height="21.2" rx="1" fill="#fafafa" stroke="#f0a050" stroke-width="3"/>
    <path d="M61.8 184.3 V181 H65.3 A2.7 2.5 0 0 1 70.7 181 H74.3 V184.3 Z" fill="#fdfdfd" stroke="#6a6a6a" stroke-width="1.2"/>
    <rect x="71.2" y="190" width="13.2" height="17.2" fill="#fafafa" stroke="#454545" stroke-width="1.4"/>
    <!-- scissors -->
    <g stroke="#9a9a9a" stroke-width="1"><path d="M109.5 175.5 L115 187.5 M115.8 175.5 L110.3 187.5"/></g>
    <g stroke="#a9c9ea" stroke-width="1.3"><circle cx="109.5" cy="189.4" r="2.2"/><circle cx="115.5" cy="189.4" r="2.2"/></g>
    <!-- copy -->
    <g stroke="#b9b9b9" stroke-width="1.2" fill="#f6f6f6"><path d="M104.5 197.8 H110.5 L112 199.5 V211.5 H104.5 Z"/><path d="M110.8 201.5 H117 L120.5 205 V213.3 H110.8 Z"/><path d="M113 208 H118 M113 210.5 H118"/></g>
    <!-- format painter -->
    <g stroke="#b8b8b8" stroke-width="1.2"><path d="M114 226.5 L118.5 222 L120.2 223.7 L115.7 228.2 Z M113.5 227 L111.3 229.2"/></g>
    <path d="M111 228 L105 233 L108.5 235 L113 230.5 Z" stroke="#f2c38c" stroke-width="1" fill="#fbeede"/>
    <!-- new slide -->
    <rect x="161.8" y="180.5" width="27.6" height="21.8" stroke="#5a5a5a" stroke-width="1.3"/>
    <rect x="164.2" y="182.8" width="23" height="17.4" fill="#fbfbfb" stroke="#7a7a7a" stroke-width="1"/>
    <path d="M164.5 187.4 H187 M175.5 187.4 V200" stroke="#7a7a7a" stroke-width="1"/>
    <path d="M159.4 182.7 H174.8 M167.3 175.2 V190.6" stroke="#3cb85c" stroke-width="1.8" stroke-linecap="butt"/>
    <!-- layout/reset/section -->
    <g stroke="#5a5a5a" stroke-width="1.2">
      <rect x="212.2" y="176.3" width="15.4" height="12.6" fill="#fbfbfb"/>
      <rect x="214.2" y="178.2" width="11.4" height="8.8" stroke="#8a8a8a" stroke-width=".9"/>
      <path d="M214.2 180.5 H225.6 M219.6 180.5 V187" stroke="#8a8a8a" stroke-width=".9"/>
      <rect x="212.2" y="198.6" width="15.4" height="12.8" fill="#fbfbfb"/>
      <rect x="214.2" y="200.6" width="11.4" height="8.8" stroke="#8a8a8a" stroke-width=".9"/>
      <rect x="212.2" y="224.4" width="14.6" height="11.6" fill="#fbfbfb"/>
      <rect x="214.2" y="226.4" width="10.6" height="7.6" stroke="#8a8a8a" stroke-width=".9"/>
    </g>
    <path d="M212 220.9 H226.8" stroke="#3cb85c" stroke-width="2.6" stroke-linecap="butt"/>
    <path d="M217.3 197.8 L213.3 200.8 L217.3 203.5 M213.8 200.8 H217.5 A3 3 0 0 1 219.8 205.5" stroke="#2f7fd6" stroke-width="1.4" fill="#f4f4f4"/>
    <!-- font size icons -->
    <g stroke="#a5a5a5" stroke-width="1.1">
      <path d="M550.6 194.7 L555.9 181.2 L561.2 194.7 M552.5 190 H559.3"/>
      <path d="M579 194.7 L583.2 184.3 L587.4 194.7 M580.5 191 H586"/>
      <path d="M618.4 194.7 L623.6 181.2 L627.8 191.5 M620.2 190 H626"/>
    </g>
    <path d="M561 185.2 L563 183 L565 185.2" stroke="#9cc2ea" stroke-width="1"/>
    <path d="M587.5 182.5 L589.5 184.5 L591.5 182.5" stroke="#9cc2ea" stroke-width="1"/>
    <path d="M625.5 194 L632.2 188.5 L634.3 191 L627.5 196.5 Z" stroke="#e2a6c6" stroke-width=".9"/>
    <!-- B I U ab x x AV Aa -->
    <g stroke="#a8a8a8" stroke-width="1.3">
      <path d="M319.8 216.8 H323.8 A2.3 2.3 0 0 1 323.8 221.3 H319.8 Z M319.8 221.3 H324.3 A2.4 2.4 0 0 1 324.3 226.2 H319.8 Z" stroke-width="1.6"/>
      <path d="M348.5 216.8 H352 M345.8 226.2 H349.3 M350.2 216.8 L347.7 226.2" stroke-width="1.1"/>
      <path d="M372 216.5 V222.5 A3.6 3.6 0 0 0 379.2 222.5 V216.5 M371.5 229 H379.5" stroke-width="1.1"/>
      <path d="M394.5 222.3 H410 M400.3 220.3 V226.2 M403.6 215.5 V226.2" stroke-width="1.1"/><circle cx="397.8" cy="223.4" r="2.6" stroke-width="1.1"/><circle cx="406.3" cy="223.4" r="2.6" stroke-width="1.1"/>
      <path d="M426 220 L432 226.3 M432 220 L426 226.3 M452 220 L458 226.3 M458 220 L452 226.3" stroke-width="1.2"/>
      <path d="M474.5 222.5 L478.3 213.5 L482 222.5 M476 219.5 H480.5 M482.5 213.5 L486 222.5 L489.5 213.5" stroke-width="1.1"/>
      <path d="M513.5 226.3 L517.5 216.5 L521.5 226.3 M515 223 H520 M529.3 220.3 V226.3" stroke-width="1.1"/><circle cx="526.5" cy="223.4" r="2.7" stroke-width="1.1"/>
      <path d="M607 229.3 L613.8 213.8 L620.6 229.3 M609.2 224.3 H618.4" stroke-width="1.1"/>
    </g>
    <path d="M435.5 214 H438 L435.5 217 H438.3 M461 225 H463.5 L461 228 H463.8" stroke="#9cc2ea" stroke-width=".8"/>
    <path d="M474.5 226.5 H490 M476.5 224.8 L474.5 226.5 L476.5 228.2 M488 224.8 L490 226.5 L488 228.2" stroke="#9cc2ea" stroke-width="1"/>
    <path d="M567.5 224 L576.5 215 L579.2 217.7 L570.2 226.7 Z M567.5 224 L566 227 L569 226.5" stroke="#b5b5b5" stroke-width="1.1"/>
    <rect x="567" y="226.6" width="16" height="3.4" fill="#f2dcb4"/>
    <rect x="606.3" y="226.8" width="16.3" height="3.6" fill="#8c8c8c"/>
    <!-- paragraph icons -->
    <g stroke="#a8a8a8" stroke-width="1.2" stroke-linecap="butt">
      <path d="M669 182.5 H679 M669 187.5 H679 M669 192.5 H679 M707 182.5 H718 M707 187.5 H718 M707 192.5 H718"/>
      <path d="M757.5 182 H772 M764 187.3 H772 M764 190.5 H772 M757.5 195 H772 M784.3 182 H798.8 M790.5 187.3 H798.8 M790.5 190.5 H798.8 M784.3 195 H798.8"/>
      <path d="M832 182 H841.6 M832 186.5 H841.6 M832 191 H841.6 M832 195.5 H841.6"/>
      <path d="M665 215 H679 M665 219.5 H675 M665 224 H679 M665 228.4 H675"/>
      <path d="M691.5 215 H706 M694 219.5 H703.5 M691.5 224 H706 M694 228.4 H703.5"/>
      <path d="M717.5 215 H732 M722 219.5 H732 M717.5 224 H732 M722 228.4 H732"/>
      <path d="M744.5 215 H759 M744.5 219.5 H759 M744.5 224 H759 M744.5 228.4 H759"/>
      <path d="M787.5 214.5 V228.5 M785.3 226.3 L787.5 228.5 L789.7 226.3"/>
    </g>
    <g fill="#8fb8e6"><rect x="664.5" y="181.5" width="2" height="2"/><rect x="664.5" y="186.5" width="2" height="2"/><rect x="664.5" y="191.5" width="2" height="2"/></g>
    <g fill="#8fb8e6" font-size="4" font-family="Liberation Sans"><text x="702.5" y="184.5">1</text><text x="702.5" y="189.5">2</text><text x="702.5" y="194.5">3</text></g>
    <g stroke="#a6c8ec" stroke-width="1.1">
      <path d="M761 188.8 H757.8 M759.5 187 L757.5 188.8 L759.5 190.6 M784.8 188.8 H788 M786.3 187 L788.3 188.8 L786.3 190.6"/>
      <path d="M826.5 182 V187 M824.5 184 L826.5 182 L828.5 184 M826.5 190.5 V195.5 M824.5 193.5 L826.5 195.5 L828.5 193.5"/>
      <path d="M881.5 185 H886 M881.5 188 H886 M881.5 191 H886 M889.5 185 H894 M889.5 188 H894 M889.5 191 H894"/>
      <path d="M792.5 214.5 V228.5 M790.3 226.3 L792.5 228.5 L794.7 226.3 M789.8 220.5 L792.5 214 L795.2 220.5"/>
      <path d="M832.5 214.5 V219.5 M830.7 216.3 L832.5 214.5 L834.3 216.3 M832.5 224.5 V229 M830.7 227.2 L832.5 229 L834.3 227.2"/>
    </g>
    <path d="M827.5 215.5 H824.5 V228.5 H827.5 M837.5 215.5 H840.5 V228.5 H837.5 M828 222 H837" stroke="#a8a8a8" stroke-width="1"/>
    <!-- smartart -->
    <path d="M921.5 180 H940 L950 191 L940 202 H921.5 L931.5 191 Z" fill="#e3e3e3" stroke="#c5c5c5" stroke-width="1"/>
    <rect x="935.5" y="189" width="16" height="13.5" fill="#f4f4f4" stroke="#bcbcbc" stroke-width="1"/>
    <path d="M938.5 193.5 H948.5 M938.5 196.5 H948.5" stroke="#c5c5c5" stroke-width="1"/>
    <!-- picture -->
    <rect x="998.3" y="180.5" width="28.2" height="20.8" fill="#fafafa" stroke="#5a5a5a" stroke-width="1.3"/>
    <path d="M999 199.3 L1006.5 190 L1014 197 L1018.5 193 L1025.8 199.3 V200.6 H999 Z" fill="#7aaef0" stroke="#2e6cc7" stroke-width="1"/>
    <circle cx="1019.5" cy="185.5" r="1.8" fill="#f0a050"/>
    <!-- shapes -->
    <rect x="1049" y="181.3" width="9.5" height="9.5" fill="#6ea6ee" stroke="#2e6cc7" stroke-width="1"/>
    <circle cx="1059.5" cy="191" r="5.4" fill="#fafafa" stroke="#5a5a5a" stroke-width="1.2"/>
    <!-- textbox -->
    <rect x="1050" y="216.5" width="14.5" height="12.2" stroke="#555" stroke-width="1"/>
    <g fill="#fff" stroke="#2e6cc7" stroke-width=".9"><circle cx="1050" cy="216.5" r="1.2"/><circle cx="1064.5" cy="216.5" r="1.2"/><circle cx="1050" cy="228.7" r="1.2"/><circle cx="1064.5" cy="228.7" r="1.2"/></g>
    <path d="M1054 226.5 L1057.3 218.5 L1060.5 226.5 M1055.2 223.6 H1059.4" stroke="#2e6cc7" stroke-width="1.2"/>
    <!-- arrange -->
    <rect x="1155" y="181.5" width="19.5" height="19.5" fill="#f9cf98" stroke="#f0a050" stroke-width="1.2"/>
    <rect x="1151" y="177.3" width="11.6" height="11.6" fill="#fafafa" stroke="#555" stroke-width="1.2"/>
    <rect x="1167.5" y="193.5" width="11.6" height="11.6" fill="#fafafa" stroke="#555" stroke-width="1.2"/>
    <!-- quick styles -->
    <rect x="1202.5" y="177.5" width="27.5" height="27.5" rx="1.5" fill="#f8f8f8" stroke="#d2d2d2" stroke-width="1"/>
    <path d="M1232.5 188 L1222 200 M1231 186.5 L1220.8 198.8" stroke="#c8c8c8" stroke-width="1.2"/>
    <path d="M1220.5 198.5 Q1215 199 1213 206 Q1219 207 1222.5 201 Z" fill="#c6dcf2" stroke="#a9c9ea" stroke-width=".9"/>
    <!-- fill / pen -->
    <path d="M1256 187.5 L1261 182.5 L1266 187.5 L1261 192.5 Z M1261 182.5 L1259 180.5" stroke="#b8b8b8" stroke-width="1.1"/>
    <path d="M1266 185.5 Q1268 183 1268 187.5" stroke="#8fb8e6" stroke-width="1"/>
    <rect x="1253.5" y="195" width="15" height="2.6" fill="#f2c6d8"/>
    <path d="M1254 215.5 H1262 M1254 215.5 V225.5 H1258 M1259 225 L1267 216 L1268.5 217.5 L1260.5 226.5 Z" stroke="#bdbdbd" stroke-width="1.1"/>
    <path d="M1259 225 L1267 216 L1268.5 217.5 L1260.5 226.5 Z" stroke="#9cc2ea" stroke-width="1.1"/>
    <rect x="1253.5" y="228" width="15" height="2.2" fill="#dbe8f6"/>
    <!-- add-ins -->
    <rect x="1314" y="177" width="29" height="29" fill="#f6f6f6" stroke="#e0603a" stroke-width=".9"/>
    <g fill="#fdfdfd" stroke="#f0a050" stroke-width="1.2"><rect x="1316.5" y="179.5" width="11.2" height="11.2" rx=".8"/><rect x="1329.4" y="179.5" width="11.2" height="11.2" rx=".8"/><rect x="1316.5" y="192.4" width="11.2" height="11.2" rx=".8"/><rect x="1329.4" y="192.4" width="11.2" height="11.2" rx=".8"/></g>
    <!-- designer -->
    <rect x="1383.5" y="180.5" width="28" height="21.5" fill="#fafafa" stroke="#5a5a5a" stroke-width="1.3"/>
    <rect x="1385.8" y="182.8" width="23.4" height="17" stroke="#8a8a8a" stroke-width=".9"/>
    <path d="M1386 186 H1409 M1403.5 186 V199.8" stroke="#8a8a8a" stroke-width="1.4"/>
    <path d="M1389 175.5 H1394 L1389.5 183 H1393 L1382.5 196 L1386 186 H1382.5 Z" fill="#f7b25a" stroke="#e58a2c" stroke-width=".9"/>
  </svg>
</div>
</body></html>
